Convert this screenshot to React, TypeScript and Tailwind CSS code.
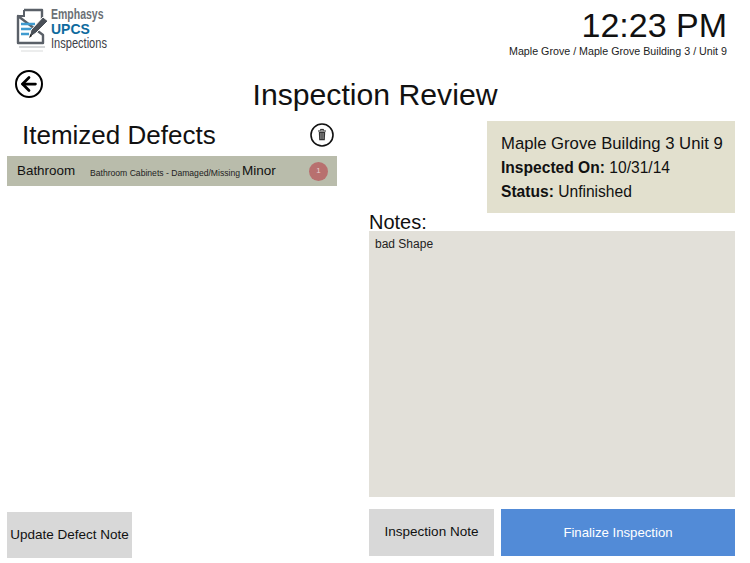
import { ArrowLeft } from "lucide-react";

function LogoIcon() {
  return (
    <svg width="35" height="50" viewBox="0 0 35 50" className="shrink-0">
      <path d="M8 2h18v9M27 27v8H2V8z" fill="none" stroke="#5a6068" strokeWidth="2.400" strokeLinejoin="round" />
      <path d="M8 2v6H2" fill="none" stroke="#5a6068" strokeWidth="2" />
      <path d="M5 16h14M5 21h11M5 26h8" stroke="#3f9bd0" strokeWidth="2.400" fill="none" />
      <path d="M13 30l2-8L27 9l5 4-12 12z" fill="#4a5058" stroke="#fff" strokeWidth="1" />
      <path d="M13 30l3-2-1.500-2z" fill="#222" />
      <rect x="3" y="38" width="26" height="2" fill="#d4d6d8" />
      <rect x="5" y="42" width="22" height="2" fill="#eceded" />
    </svg>
  );
}

function TrashIcon() {
  return (
    <svg width="24" height="24" viewBox="0 0 24 24">
      <circle cx="12" cy="12" r="11" fill="none" stroke="#111" strokeWidth="1.600" />
      <path d="M10.500 7.400V6.400h3v1M8 8h8" fill="none" stroke="#222" strokeWidth="1" />
      <path d="M8.800 9h6.400l-.4 8.200H9.200z" fill="#333" />
      <path d="M10.700 10v6M12 10v6M13.300 10v6" stroke="#ccc" strokeWidth=".5" />
    </svg>
  );
}

export default function App() {
  return (
    <div className="w-[750px] h-[563px] bg-white overflow-hidden flex flex-col font-['Liberation_Sans',sans-serif] text-[#111]">
      <header className="h-[70px] flex justify-between pl-[16px] pr-[23px]">
        <div className="flex gap-0 pt-[8px]">
          <LogoIcon />
          <div className="w-[58px] flex flex-col -mt-[1px]">
            <span className="text-[14px] h-[14px] leading-[14px] font-bold text-[#6b7075] origin-left scale-x-[.75] whitespace-nowrap">Emphasys</span>
            <span className="text-[15px] h-[15px] leading-[15px] font-bold text-[#0f6a9e] origin-left scale-x-[.93] whitespace-nowrap">UPCS</span>
            <span className="text-[14px] h-[14px] leading-[14px] text-[#3d4147] origin-left scale-x-[.79] whitespace-nowrap">Inspections</span>
          </div>
        </div>
        <div className="flex flex-col items-end pt-[8px]">
          <span className="text-[34px] leading-[35px]">12:23 PM</span>
          <span className="text-[10.700px] leading-[14px] mt-[1px] text-[#222]">Maple Grove / Maple Grove Building 3 / Unit 9</span>
        </div>
      </header>

      <div className="h-[51px] grid grid-cols-[1fr_auto_1fr] pl-[15px] pr-[15px]">
        <button className="w-[28px] h-[28px] rounded-full border-[2.500px] border-black flex items-center justify-center">
          <ArrowLeft size={22} strokeWidth={3} color="#000" />
        </button>
        <h1 className="text-[30.200px] leading-[50px] text-center">Inspection Review</h1>
      </div>

      <main className="flex-1 flex pl-[7px] pr-[15px] pb-[5px] gap-[32px]">
        <section className="w-[330px] flex flex-col">
          <div className="h-[35px] pb-[7px] flex items-center justify-between pl-[15px] pr-[3px]">
            <h2 className="text-[26px] leading-[29px]">Itemized Defects</h2>
            <TrashIcon />
          </div>
          <div className="h-[30px] bg-[#b9bcab] flex items-center pl-[10px] pr-[9px]">
            <span className="text-[13.400px] w-[73px]">Bathroom</span>
            <span className="text-[8.600px] mt-[4px] text-[#222]">Bathroom Cabinets - Damaged/Missing</span>
            <span className="text-[13.500px] ml-[2px]">Minor</span>
            <span className="ml-auto w-[19px] h-[19px] rounded-full bg-[#b8706f] text-[#e8cfcf] text-[8px] flex items-center justify-center">1</span>
          </div>
          <button className="mt-auto w-[125px] h-[46px] bg-[#d8d8d8] text-[13.500px]">Update Defect Note</button>
        </section>

        <section className="flex-1 flex flex-col pb-[2px]">
          <div className="self-end w-[248px] h-[92px] bg-[#e2e0ce] pl-[14px] pt-[11px] text-[15.600px] leading-[24px]">
            <p className="text-[16.700px]">Maple Grove Building 3 Unit 9</p>
            <p><b>Inspected On:</b> 10/31/14</p>
            <p><b>Status:</b> Unfinished</p>
          </div>
          <span className="text-[20px] leading-[18px] h-[18px]">Notes:</span>
          <div className="h-[266px] bg-[#e2e0d9] px-[6px] py-[6px] text-[12px] leading-[14px] text-[#222]">bad Shape</div>
          <div className="flex gap-[7px] mt-[12px]">
            <button className="w-[125px] h-[47px] bg-[#d8d8d8] text-[13.500px]">Inspection Note</button>
            <button className="flex-1 h-[47px] bg-[#528bd7] text-white text-[13.200px]">Finalize Inspection</button>
          </div>
        </section>
      </main>
    </div>
  );
}
